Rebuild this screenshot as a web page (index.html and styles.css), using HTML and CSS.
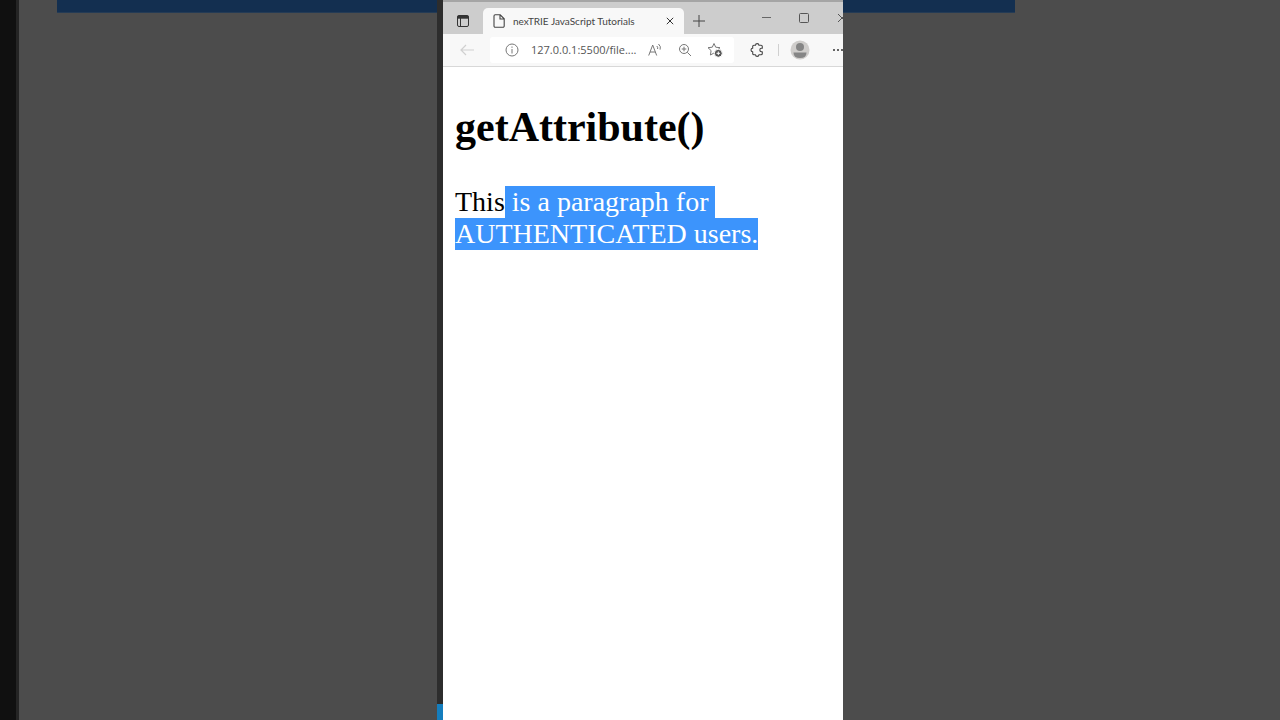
FILE: index.html
```html
<!DOCTYPE html>
<html lang="en">
<head>
<meta charset="utf-8">
<title>nexTRIE JavaScript Tutorials</title>
<link rel="stylesheet" href="styles.css">
</head>
<body>
  <div class="backdrop">
    <div class="backdrop-edge"></div>
    <div class="backdrop-bar"></div>
  </div>

  <div class="video">
    <div class="editor-edge"></div>
    <div class="browser">
      <div class="tab-bar">
        <button class="tab-actions" aria-label="Tab actions">
          <svg width="14" height="14" viewBox="0 0 14 14" fill="none" stroke="#333">
            <rect x="1.5" y="1.5" width="11" height="11" rx="1.5"/>
            <path d="M1.5 3.2h11" stroke-width="3"/>
            <path d="M4.5 4v8"/>
          </svg>
        </button>
        <div class="tab">
          <svg width="12" height="14" viewBox="0 0 12 14" fill="none" stroke="#444" stroke-width="1.1">
            <path d="M2.200.8h5l4 4v7.200a1.200 1.200 0 0 1-1.200 1.200H2.200A1.200 1.200 0 0 1 1 12V2A1.200 1.200 0 0 1 2.200.8zM7 .8v4.200h4.200"/>
          </svg>
          <span class="tab-title">nexTRIE JavaScript Tutorials</span>
          <button class="tab-close" aria-label="Close tab">
            <svg width="8" height="8" viewBox="0 0 8 8" stroke="#333"><path d="M.8.8l6.400 6.400M7.200.8L.8 7.200"/></svg>
          </button>
        </div>
        <button class="new-tab" aria-label="New tab">
          <svg width="12" height="12" viewBox="0 0 12 12" stroke="#444"><path d="M6 0v12M0 6h12"/></svg>
        </button>
        <div class="window-buttons">
          <button aria-label="Minimize">
            <svg width="10" height="10" viewBox="0 0 10 10" stroke="#666"><path d="M1 4.500h9"/></svg>
          </button>
          <button aria-label="Maximize">
            <svg width="10" height="10" viewBox="0 0 10 10" fill="none" stroke="#555"><rect x=".5" y=".5" width="9" height="9" rx="1"/></svg>
          </button>
          <button aria-label="Close">
            <svg width="8" height="8" viewBox="0 0 8 8" stroke="#555"><path d="M0 0l8 8M8 0l-8 8"/></svg>
          </button>
        </div>
      </div>

      <div class="toolbar">
        <button class="back" aria-label="Back" disabled>
          <svg width="14" height="12" viewBox="0 0 14 12" fill="none" stroke="#d0d0d0" stroke-width="1.2"><path d="M14 6H1M6 1L1 6l5 5"/></svg>
        </button>
        <div class="address">
          <svg class="info" width="14" height="14" viewBox="0 0 14 14" fill="none" stroke="#777">
            <circle cx="7" cy="7" r="6"/><path d="M7 6v4.500M7 3.500v1.300"/>
          </svg>
          <input type="text" aria-label="Address" value="127.0.0.1:5500/file....">
          <button aria-label="Read aloud">
            <svg width="14" height="14" viewBox="0 0 14 14" fill="none" stroke="#777">
              <path d="M.7 12.500L4.700 2l4 10.500M2 9h5.400M8.800 3q1.300 1.200.8 3M10.500 1q2.800 2.400 1.600 5.600"/>
            </svg>
          </button>
          <button aria-label="Zoom">
            <svg width="14" height="14" viewBox="0 0 14 14" fill="none" stroke="#777">
              <circle cx="6" cy="6" r="4.500"/><path d="M9.300 9.300L13 13M6 3.700v4.600M3.700 6h4.600"/>
            </svg>
          </button>
          <button aria-label="Add to favorites">
            <svg width="16" height="16" viewBox="0 0 16 16" fill="none" stroke="#777" stroke-linejoin="round">
              <path d="M7 1.500l1.700 3.700 4.300.5-3.100 2.900.7 4.400L7 11l-3.600 2 .7-4.400L1 5.700l4.300-.5z"/>
              <circle cx="11.300" cy="11.300" r="4" fill="#555" stroke="#fff"/>
              <path d="M11.300 9.500v3.600M9.500 11.300h3.600" stroke="#fff"/>
            </svg>
          </button>
        </div>
        <button class="extensions" aria-label="Extensions">
          <svg width="14" height="14" viewBox="0 0 14 14" fill="none" stroke="#444" stroke-width="1.1" stroke-linejoin="round">
            <path d="M4 2.300h1.500a1.700 1.700 0 0 1 3.400 0H11a1.300 1.300 0 0 1 1.300 1.300v1.700h-.8a1.700 1.700 0 0 0 0 3.400h.8v1.700a1.300 1.300 0 0 1-1.300 1.300H8.900a1.700 1.700 0 0 1-3.400 0H4a1.300 1.300 0 0 1-1.300-1.300V8.700a1.700 1.700 0 0 1 0-3.400V3.600A1.300 1.300 0 0 1 4 2.300z"/>
          </svg>
        </button>
        <span class="separator"></span>
        <button class="profile" aria-label="Profile">
          <svg width="20" height="20" viewBox="0 0 20 20">
            <circle cx="10" cy="10" r="9.500" fill="#cfcdcb"/>
            <circle cx="10" cy="7" r="4" fill="#858585"/>
            <path d="M3.500 12.500h13q0 5.500-6.500 5.500t-6.500-5.500z" fill="#858585"/>
          </svg>
        </button>
        <button class="menu" aria-label="Settings and more">
          <svg width="12" height="4" viewBox="0 0 12 4" fill="#333"><circle cx="2" cy="2" r="1"/><circle cx="6" cy="2" r="1"/><circle cx="10" cy="2" r="1"/></svg>
        </button>
      </div>

      <main class="page">
        <h1>getAttribute()</h1>
        <p>This<span class="selected"> is a paragraph for&nbsp;<br>AUTHENTICATED users.</span></p>
      </main>
    </div>
  </div>
</body>
</html>
```
FILE: styles.css
```css
* {
  box-sizing: border-box;
}

body {
  margin: 0;
  min-height: 100vh;
  display: flex;
  justify-content: center;
  background: #4c4c4c;
}

button {
  display: flex;
  align-items: center;
  justify-content: center;
  flex-shrink: 0;
  padding: 0;
  border: none;
  background: none;
}

svg {
  flex-shrink: 0;
}

/* enlarged dark copy of the video behind it */
.backdrop {
  position: absolute;
  inset: 0;
  display: flex;
  align-items: flex-start;
}

.backdrop-edge {
  width: 19px;
  height: 100%;
  background: #101010;
  border-right: 3px solid #242424;
}

.backdrop-bar {
  flex: 1;
  height: 13px;
  margin: 0 265px 0 38px;
  background: #132f50;
  border-bottom: 1px solid #243b55;
}

.video {
  position: relative;
  display: flex;
  width: 406px;
  overflow: hidden;
}

.editor-edge {
  width: 6px;
  background: #2d2d2d;
  border-bottom: 16px solid #147dbd;
}

.browser {
  flex: 1;
  min-width: 0;
  background: #fff;
}

.tab-bar {
  display: flex;
  align-items: flex-end;
  height: 34px;
  background: #cdcdcd;
  border-top: 2px solid #a5a5a5;
}

.tab-actions {
  width: 40px;
  height: 27px;
}

.tab {
  display: flex;
  align-items: center;
  width: 201px;
  height: 26px;
  padding: 0 10px;
  background: #f8f8f8;
  border-radius: 5px 5px 0 0;
}

.tab-title {
  flex: 1;
  margin-left: 8px;
  font: 10px Lato, sans-serif;
  color: #444;
  white-space: nowrap;
}

.new-tab {
  width: 30px;
  height: 27px;
}

.window-buttons {
  display: flex;
  align-self: center;
  margin-left: auto;
  margin-right: -18px;
}

.window-buttons button {
  width: 38px;
  height: 32px;
}

.toolbar {
  display: flex;
  align-items: center;
  height: 33px;
  background: #f8f8f8;
  border-bottom: 1px solid #d8d8d8;
}

.back {
  width: 47px;
  height: 32px;
}

.address {
  display: flex;
  flex-shrink: 0;
  align-items: center;
  width: 244px;
  height: 26px;
  padding-left: 15px;
  background: #fff;
  border-radius: 3px;
}

.address input {
  flex: 1;
  min-width: 0;
  margin-left: 12px;
  padding: 0 0 2px;
  border: none;
  outline: none;
  background: none;
  font: 11px "Open Sans", sans-serif;
  color: #555;
}

.address button {
  width: 30px;
  height: 24px;
}

.address button:last-child {
  margin-right: 4px;
}

.extensions {
  width: 42px;
  margin-left: 2px;
}

.separator {
  flex-shrink: 0;
  width: 1px;
  height: 12px;
  background: #d0d0d0;
}

.profile {
  width: 42px;
}

.menu {
  width: 34px;
}

.page {
  padding: 36px 12px;
  font-family: "Liberation Serif", serif;
  color: #000;
}

.page h1 {
  margin: 0 0 35px;
  font-size: 42px;
  line-height: 48px;
}

.page p {
  margin: 0;
  font-size: 28px;
  line-height: 32px;
}

.selected {
  padding-bottom: 1px;
  background: #3c94fc;
  color: #fff;
}
```
